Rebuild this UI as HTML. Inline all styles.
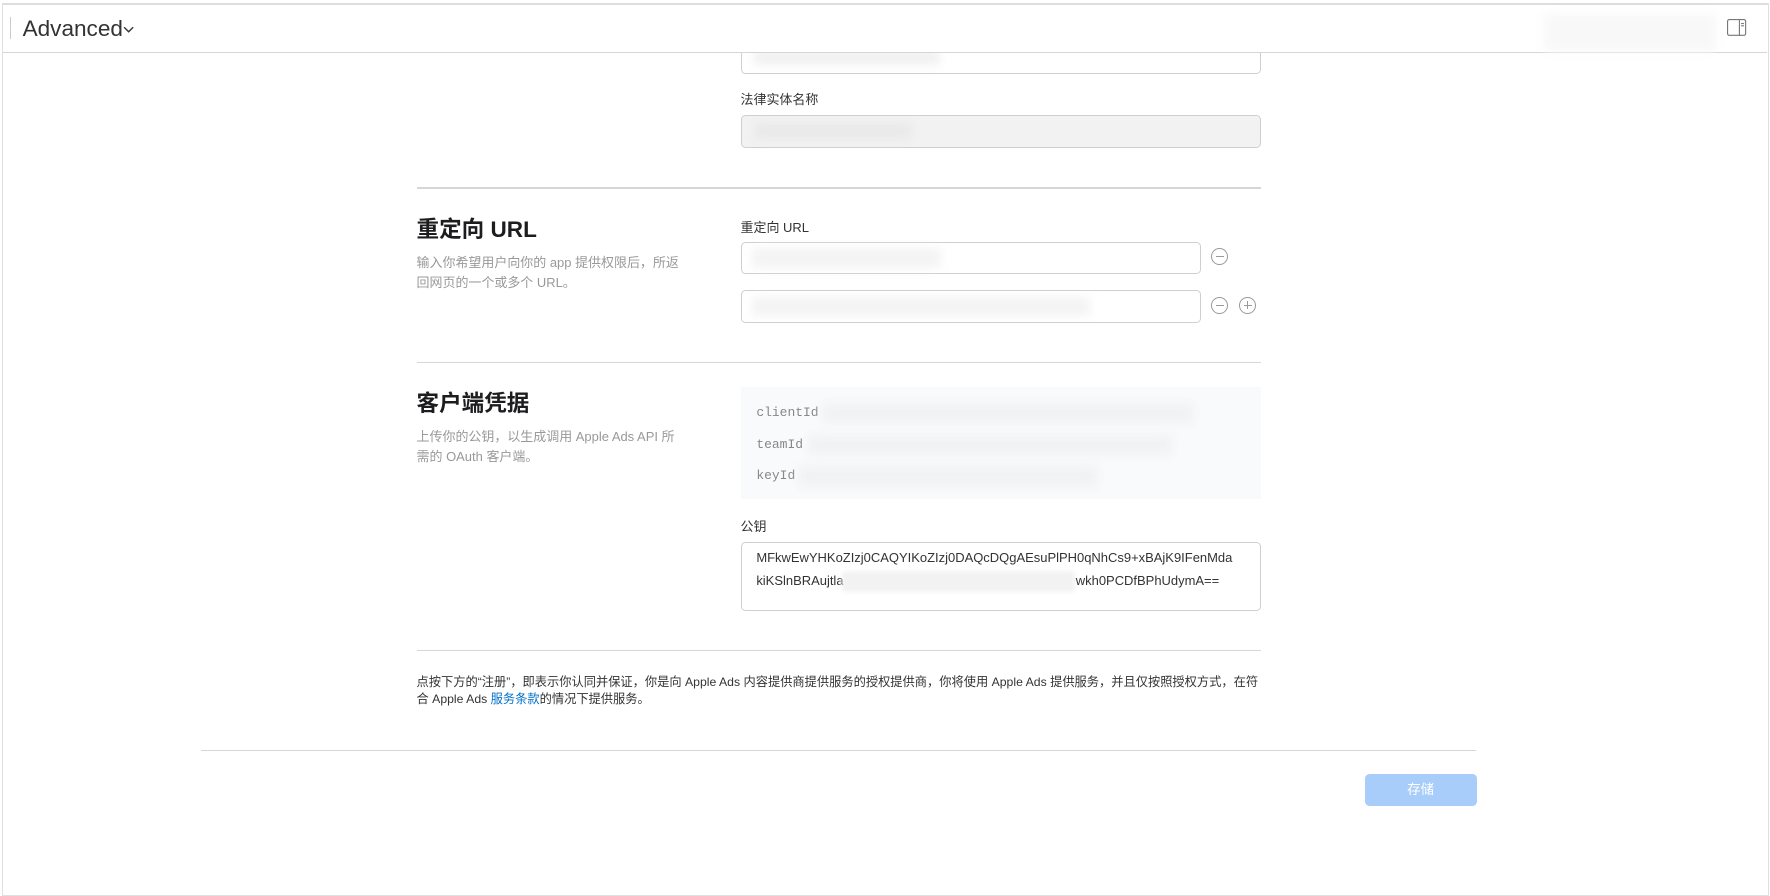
<!DOCTYPE html>
<html><head><meta charset="utf-8"><style>
html,body{margin:0;padding:0;background:#fff;}
body{width:1770px;height:896px;overflow:hidden;}
#w{zoom:1.12883;width:1568px;height:794px;position:relative;font-family:"Liberation Sans","Noto Sans CJK SC",sans-serif;color:#333;}
.a{position:absolute;}
.frame{left:2px;top:3px;width:1563px;height:788px;border:1px solid #e0e0e0;border-top:2px solid #ddd;}
.hdr{left:3px;top:5px;width:1562px;height:41px;border-bottom:1px solid #d6d6d6;background:#fff;}
.inp{border:1px solid #cfcfcf;border-radius:4px;background:#fff;box-sizing:border-box;}
.blur{background:#f1f1f1;filter:blur(4px);border-radius:3px;}
.lbl{font-size:11.5px;color:#333;}
.hr{height:1px;background:#d6d6d6;}
.h{font-size:20px;font-weight:bold;color:#1d1d1f;}
.d{font-size:11.5px;color:#999;line-height:18px;}
.m{font-family:"Liberation Mono",monospace;font-size:11.5px;color:#888;}
.c{width:15px;height:15px;border:1px solid #999;border-radius:50%;box-sizing:border-box;}
.c:before{content:"";position:absolute;left:3px;right:3px;top:6px;height:1px;background:#999;}
.p:after{content:"";position:absolute;top:3px;bottom:3px;left:6px;width:1px;background:#999;}
</style></head><body><div id="w">
<div class="a frame"></div>
<div class="a inp" style="left:656px;top:36px;width:461px;height:30px;"></div>
<div class="a blur" style="left:668px;top:44px;width:165px;height:14px;"></div>
<div class="a hdr"></div>
<div class="a" style="left:9px;top:15px;width:1px;height:20px;background:#ccc"></div>
<div class="a" style="left:20px;top:14px;font-size:20px;color:#333;">Advanced</div>
<svg class="a" style="left:109px;top:22px" width="10" height="8"><path d="M1 2 L5 6 L9 2" fill="none" stroke="#333" stroke-width="1.2"/></svg>
<div class="a blur" style="left:1368px;top:12px;width:152px;height:34px;background:#f8f8f8"></div>
<svg class="a" style="left:1530px;top:17px" width="18" height="16"><rect x="0.5" y="0.5" width="16" height="14" rx="1.5" fill="none" stroke="#777"/><line x1="11" y1="1" x2="11" y2="15" stroke="#777"/><line x1="12.5" y1="4" x2="15" y2="4" stroke="#777"/><line x1="12.5" y1="6" x2="15" y2="6" stroke="#777"/></svg>

<div class="a lbl" style="left:656px;top:79px">法律实体名称</div>
<div class="a inp" style="left:656px;top:102px;width:461px;height:29px;background:#f2f2f2"></div>
<div class="a blur" style="left:668px;top:109px;width:140px;height:14px;background:#e9e9e9"></div>
<div class="a hr" style="left:369px;top:166px;width:748px"></div>

<div class="a h" style="left:369px;top:187px">重定向 URL</div>
<div class="a d" style="left:369px;top:224px;width:240px">输入你希望用户向你的 app 提供权限后，所返回网页的一个或多个 URL。</div>
<div class="a lbl" style="left:656px;top:192px">重定向 URL</div>
<div class="a inp" style="left:656px;top:214px;width:408px;height:29px"></div>
<div class="a blur" style="left:666px;top:220px;width:168px;height:17px;background:#f4f4f4"></div>
<div class="a c" style="left:1073px;top:220px"></div>
<div class="a inp" style="left:656px;top:257px;width:408px;height:29px"></div>
<div class="a blur" style="left:666px;top:263px;width:300px;height:17px;background:#f4f4f4"></div>
<div class="a c" style="left:1073px;top:263px"></div>
<div class="a c p" style="left:1098px;top:263px"></div>
<div class="a hr" style="left:369px;top:321px;width:748px"></div>

<div class="a h" style="left:369px;top:341px">客户端凭据</div>
<div class="a d" style="left:369px;top:378px;width:240px">上传你的公钥，以生成调用 Apple Ads API 所需的 OAuth 客户端。</div>
<div class="a" style="left:656px;top:343px;width:461px;height:99px;background:#f9fafc"></div>
<div class="a m" style="left:670px;top:359px">clientId</div>
<div class="a blur" style="left:728px;top:357px;width:330px;height:18px;background:#f1f2f4"></div>
<div class="a m" style="left:670px;top:387px">teamId</div>
<div class="a blur" style="left:716px;top:385px;width:322px;height:18px;background:#f1f2f4"></div>
<div class="a m" style="left:670px;top:415px">keyId</div>
<div class="a blur" style="left:708px;top:413px;width:265px;height:18px;background:#f1f2f4"></div>
<div class="a lbl" style="left:656px;top:457px">公钥</div>
<div class="a inp" style="left:656px;top:480px;width:461px;height:61px"></div>
<div class="a" style="left:670px;top:487px;font-size:11.5px;color:#333">MFkwEwYHKoZIzj0CAQYIKoZIzj0DAQcDQgAEsuPlPH0qNhCs9+xBAjK9IFenMda</div>
<div class="a" style="left:670px;top:508px;font-size:11.5px;color:#333">kiKSlnBRAujtla</div>
<div class="a blur" style="left:746px;top:506px;width:206px;height:18px;background:#f2f2f2;filter:blur(2px)"></div>
<div class="a" style="left:953px;top:508px;font-size:11.5px;color:#333">wkh0PCDfBPhUdymA==</div>
<div class="a hr" style="left:369px;top:576px;width:748px"></div>

<div class="a" style="left:369px;top:597px;width:750px;font-size:10.85px;line-height:15.5px;color:#333">点按下方的“注册”，即表示你认同并保证，你是向 Apple Ads 内容提供商提供服务的授权提供商，你将使用 Apple Ads 提供服务，并且仅按照授权方式，在符合 Apple Ads <span style="color:#0070c9">服务条款</span>的情况下提供服务。</div>
<div class="a hr" style="left:178px;top:664px;width:1130px"></div>
<div class="a" style="left:1209px;top:686px;width:99px;height:28px;background:#a8cdfb;border-radius:4px;color:#fff;font-size:12px;text-align:center;line-height:28px">存储</div>
</div></body></html>
